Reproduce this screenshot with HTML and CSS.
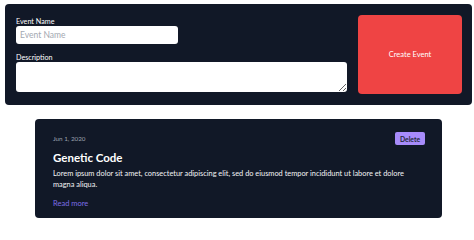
FILE: index.html
```html
<!DOCTYPE html>
<html>
<head>
<meta charset="utf-8">
<link rel="stylesheet" href="styles.css">
</head>
<body>
<form class="event-form">
  <div class="fields">
    <label class="label" for="name">Event Name</label>
    <input class="input" id="name" type="text" placeholder="Event Name">
    <label class="label label-desc" for="desc">Description</label>
    <textarea class="textarea" id="desc"></textarea>
  </div>
  <button class="create-btn" type="button">Create Event</button>
</form>
<article class="event-card">
  <div class="card-head">
    <span class="date">Jun 1, 2020</span>
    <button class="delete-btn" type="button">Delete</button>
  </div>
  <h2 class="title">Genetic Code</h2>
  <p class="desc">Lorem ipsum dolor sit amet, consectetur adipiscing elit, sed do eiusmod tempor incididunt ut labore et dolore magna aliqua.</p>
  <a class="read-more" href="#">Read more</a>
</article>
</body>
</html>
```
FILE: styles.css
```css
* { box-sizing: border-box; }
html, body { margin: 0; padding: 0; background: #ffffff; }
body { font-family: Lato, "Noto Sans", sans-serif; color: #fff; }

.event-form {
  display: flex;
  gap: 11px;
  margin: 4px 2px 0 5px;
  padding: 11px 10px 11px 11px;
  background: #111827;
  border-radius: 4px;
  height: 101px;
}
.fields {
  flex: 1;
  display: flex;
  flex-direction: column;
  padding-top: 2px;
}
.label {
  display: block;
  font-size: 7.2px;
  line-height: 9px;
  color: #fff;
}
.label-desc { margin-top: 9px; }
.input {
  width: 162px;
  height: 18px;
  border: none;
  border-radius: 3px;
  background: #fff;
  padding: 0 4px;
  font-family: inherit;
  font-size: 8.5px;
  color: #111;
  outline: none;
}
.input::placeholder { color: #a3a8b1; }
.textarea {
  width: 100%;
  height: 30px;
  border: none;
  border-radius: 3px;
  background: #fff;
  resize: vertical;
  font-family: inherit;
  outline: none;
  padding: 2px 4px;
}
.create-btn {
  width: 104px;
  border: none;
  border-radius: 4px;
  background: #ef4444;
  color: #fff;
  font-family: inherit;
  font-size: 7.5px;
}

.event-card {
  margin: 14px 0 0 35px;
  width: 407px;
  height: 99px;
  background: #111827;
  border-radius: 4px;
  padding: 13px 18px 10px 18px;
}
.card-head {
  display: flex;
  justify-content: space-between;
  align-items: center;
  height: 13px;
}
.date {
  font-size: 6.3px;
  color: #9ca3af;
}
.delete-btn {
  width: 30px;
  height: 13px;
  padding: 0;
  border: none;
  border-radius: 2px;
  background: #a78bfa;
  color: #1f2937;
  font-family: inherit;
  font-weight: 700;
  font-size: 6.8px;
  margin-right: -1px;
}
.title {
  margin: 5px 0 0;
  font-size: 11.5px;
  line-height: 15px;
  font-weight: 700;
  color: #fff;
}
.desc {
  margin: 3px 0 0;
  font-size: 7.4px;
  line-height: 11px;
  color: #f3f4f6;
}
.read-more {
  display: block;
  margin-top: 9px;
  font-size: 7.5px;
  line-height: 10px;
  color: #7c6ee6;
  text-decoration: none;
}
```
